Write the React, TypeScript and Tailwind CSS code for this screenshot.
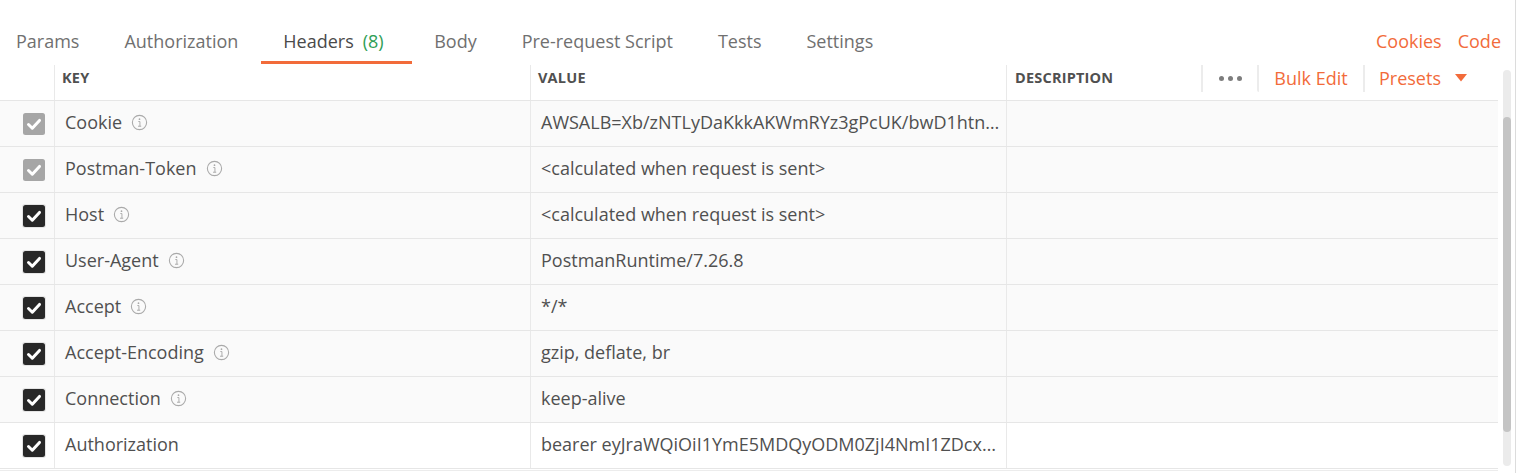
import React from 'react';

const tabs = [
  { label: 'Params' },
  { label: 'Authorization' },
  { label: 'Headers', count: '(8)', active: true },
  { label: 'Body' },
  { label: 'Pre-request Script' },
  { label: 'Tests' },
  { label: 'Settings' },
];

const headers = [
  { key: 'Cookie', value: 'AWSALB=Xb/zNTLyDaKkkAKWmRYz3gPcUK/bwD1htn…', auto: true, info: true },
  { key: 'Postman-Token', value: '<calculated when request is sent>', auto: true, info: true },
  { key: 'Host', value: '<calculated when request is sent>', info: true },
  { key: 'User-Agent', value: 'PostmanRuntime/7.26.8', info: true },
  { key: 'Accept', value: '*/*', info: true },
  { key: 'Accept-Encoding', value: 'gzip, deflate, br', info: true },
  { key: 'Connection', value: 'keep-alive', info: true },
  { key: 'Authorization', value: 'bearer eyJraWQiOiI1YmE5MDQyODM0ZjI4NmI1ZDcx…', white: true },
];

function Checkbox({ muted }: { muted?: boolean }) {
  return (
    <span className={muted ? 'flex p-[1px]' : 'flex p-[1px] rounded-[3px] bg-[#e4e4e4]'}>
      <svg width="22" height="22" viewBox="0 0 22 22">
        <rect x="0" y="0" width="22" height="22" rx="2.5" fill={muted ? '#a6a6a6' : '#282828'} />
        <polyline
          points="5.5,11.5 9.3,15.2 16.5,7.4"
          fill="none"
          stroke="#ffffff"
          strokeWidth="3"
          strokeLinecap="round"
          strokeLinejoin="round"
        />
      </svg>
    </span>
  );
}

function InfoIcon() {
  return (
    <svg width="17" height="17" viewBox="0 0 16 16" className="shrink-0">
      <circle cx="8" cy="8" r="6.7" fill="none" stroke="#a9a9a9" strokeWidth="1" />
      <circle cx="8" cy="4.9" r="0.8" fill="#a9a9a9" />
      <path d="M6.9 7.1h1.5v4.4M6.6 11.5h3" fill="none" stroke="#a9a9a9" strokeWidth="0.9" />
    </svg>
  );
}

export default function App() {
  return (
    <div className="w-[1516px] h-[473px] bg-white overflow-hidden border-r border-[#dcdcdc] flex flex-col font-['Open_Sans',sans-serif] select-none">
      {/* Tab bar */}
      <div className="h-[65px] pt-[20px] flex items-start justify-between">
        <div className="flex ml-[-6.5px]">
          {tabs.map(t => (
            <div
              key={t.label}
              className={
                'h-[44px] pt-[1px] flex items-center text-[18px] whitespace-nowrap border-b-[3px] ' +
                (t.active
                  ? 'pl-[22.5px] pr-[28px] border-[#f26b3a] text-[#4a4a4a]'
                  : 'px-[22.5px] border-transparent text-[#707070]')
              }
            >
              {t.label}
              {t.count && <span className="ml-[9px] text-[#2f9e56]">{t.count}</span>}
            </div>
          ))}
        </div>
        <div className="h-[41px] pt-[1px] flex items-center gap-[16px] pr-[14px] text-[18px] text-[#f26b3a]">
          <span>Cookies</span>
          <span>Code</span>
        </div>
      </div>

      {/* Table + scrollbar */}
      <div className="flex flex-1 min-h-0">
        <div className="w-[1498px] shrink-0 flex flex-col">
          {/* Header row */}
          <div className="h-[36px] shrink-0 flex border-b border-[#e6e6e6] bg-white text-[14.5px] font-bold text-[#505050] tracking-[0.2px]">
            <div className="w-[55px] border-r border-[#e9e9e9]" />
            <div className="w-[476px] border-r border-[#e9e9e9]">
              <div className="h-[26px] pl-[7px] flex items-center">KEY</div>
            </div>
            <div className="w-[476px] border-r border-[#e9e9e9]">
              <div className="h-[26px] pl-[7px] flex items-center">VALUE</div>
            </div>
            <div className="flex-1 flex items-start h-[27px]">
              <div className="flex-1 h-[26px] pl-[8px] flex items-center">DESCRIPTION</div>
              <div className="w-[2px] h-full bg-[#ececec]" />
              <div className="w-[54px] h-[26px] flex items-center justify-center gap-[4px]">
                <span className="w-[5px] h-[5px] rounded-full bg-[#7d7d7d]" />
                <span className="w-[5px] h-[5px] rounded-full bg-[#7d7d7d]" />
                <span className="w-[5px] h-[5px] rounded-full bg-[#7d7d7d]" />
              </div>
              <div className="w-[2px] h-full bg-[#ececec] rounded-bl-[2px]" />
              <div className="w-[104px] h-[26px] flex items-center justify-center text-[18px] font-normal text-[#f26b3a] tracking-normal">
                Bulk Edit
              </div>
              <div className="w-[2px] h-full bg-[#ececec]" />
              <div className="w-[133px] h-[26px] pl-[14px] flex items-center gap-[14px] text-[18px] font-normal text-[#f26b3a] tracking-normal">
                <span>Presets</span>
                <svg width="12" height="8" viewBox="0 0 12 8">
                  <path d="M0 0h12L6 7.5z" fill="#f26b3a" />
                </svg>
              </div>
            </div>
          </div>

          {/* Rows */}
          {headers.map(h => (
            <div
              key={h.key}
              className={
                'h-[46px] shrink-0 flex border-b border-[#e6e6e6] text-[18px] text-[#505050] ' +
                (h.white ? 'bg-white' : 'bg-[#fafafa]')
              }
            >
              <div className="w-[55px] border-r border-[#e9e9e9] pl-[22px] flex items-center">
                <Checkbox muted={h.auto} />
              </div>
              <div className="w-[476px] border-r border-[#e9e9e9] pl-[10px] pb-[2px] flex items-center gap-[9px]">
                <span>{h.key}</span>
                {h.info && <InfoIcon />}
              </div>
              <div className="w-[476px] border-r border-[#e9e9e9] pl-[10px] pb-[2px] flex items-center whitespace-nowrap overflow-hidden">
                {h.value}
              </div>
              <div className="flex-1" />
            </div>
          ))}
          <div className="h-[2px] shrink-0 border-b border-[#ececec]" />
        </div>

        {/* Scrollbar */}
        <div className="pl-[5px] pt-[5px] pb-[7px] flex">
          <div className="w-[8px] rounded-full bg-[#ebebeb] pt-[47px] pb-[34px] flex">
            <div className="flex-1 rounded-full bg-[#c4c4c4]" />
          </div>
        </div>
      </div>
    </div>
  );
}
